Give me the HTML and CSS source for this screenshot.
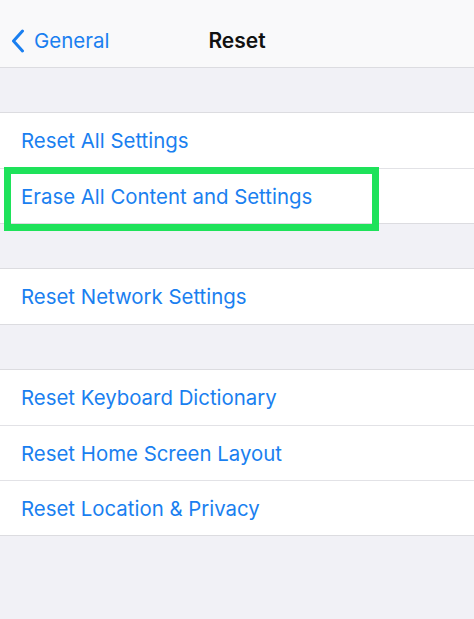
FILE: index.html
```html
<!DOCTYPE html>
<html>
<head>
<meta charset="utf-8">
<link rel="stylesheet" href="styles.css">
</head>
<body>
<div class="screen">
  <header class="nav">
    <div class="back">
      <svg class="chev" width="14" height="24" viewBox="0 0 14 24"><path d="M11.5 2 L2.5 12 L11.5 22" fill="none" stroke="#1a7ff0" stroke-width="3" stroke-linecap="round" stroke-linejoin="round"/></svg>
      <span>General</span>
    </div>
    <div class="title">Reset</div>
  </header>
  <div class="gap first"></div>
  <section class="group">
    <div class="row"><span>Reset All Settings</span></div>
    <div class="row highlight"><span>Erase All Content and Settings</span></div>
  </section>
  <div class="gap"></div>
  <section class="group">
    <div class="row"><span>Reset Network Settings</span></div>
  </section>
  <div class="gap"></div>
  <section class="group">
    <div class="row"><span>Reset Keyboard Dictionary</span></div>
    <div class="row"><span>Reset Home Screen Layout</span></div>
    <div class="row"><span>Reset Location &amp; Privacy</span></div>
  </section>
  <div class="fill"></div>
</div>
</body>
</html>
```
FILE: styles.css
```css
html, body {
  margin: 0;
  padding: 0;
}
body {
  width: 474px;
  height: 619px;
  overflow: hidden;
  background: #f1f1f6;
  font-family: Inter, "Liberation Sans", sans-serif;
}
.screen {
  display: flex;
  flex-direction: column;
  height: 619px;
}
.nav {
  position: relative;
  height: 68px;
  padding-top: 14px;
  background: #f9f9fa;
  border-bottom: 1px solid #dcdce0;
  box-sizing: border-box;
  display: flex;
  align-items: center;
}
.back {
  display: flex;
  align-items: center;
  gap: 9px;
  padding-left: 11px;
  color: #1a7ff0;
  font-size: 20.5px;
}
.title {
  position: absolute;
  left: 0;
  right: 0;
  top: 14px;
  bottom: 0;
  display: flex;
  align-items: center;
  justify-content: center;
  font-weight: 600;
  font-size: 21px;
  color: #111;
  pointer-events: none;
}
.gap {
  height: 44px;
  border-bottom: 1px solid #dcdce0;
}
.gap.first {
  height: 44px;
}
.group {
  background: #fff;
  border-bottom: 1px solid #dcdce0;
}
.row {
  height: 55px;
  box-sizing: border-box;
  display: flex;
  align-items: center;
  padding-left: 21px;
  color: #1a7ff0;
  font-size: 20.4px;
  position: relative;
}
.row + .row {
  border-top: 1px solid #e2e2e6;
}
.highlight::after {
  content: "";
  position: absolute;
  left: 4px;
  top: -2px;
  width: 375px;
  height: 64px;
  border: 7px solid #1ee25a;
  box-sizing: border-box;
}
.fill {
  flex: 1;
}
```
